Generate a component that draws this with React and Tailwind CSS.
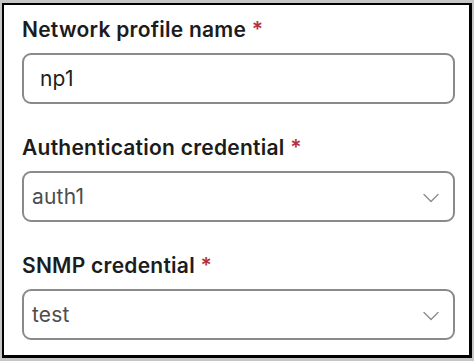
const FONT = { fontFamily: "Inter, 'Noto Sans', sans-serif" };

function Label({ children }) {
  return (
    <div className="text-[21px] leading-[24px] font-semibold tracking-[0.25px] text-[#1c1c1c]">
      {children} <span className="text-[#b3303c]">*</span>
    </div>
  );
}

function Chevron() {
  return (
    <svg width="16" height="10" viewBox="0 0 16 10" className="shrink-0 mt-[2px]">
      <path d="M1 1.5 L8 8.5 L15 1.5" fill="none" stroke="#8c8c8c" strokeWidth="1.4" strokeLinecap="round" strokeLinejoin="round" />
    </svg>
  );
}

function SelectField({ label, value, top }) {
  return (
    <div className={top}>
      <Label>{label}</Label>
      <div className="mt-[11px] h-[51px] rounded-[9px] border-2 border-[#8a8a8a] flex items-center justify-between pl-[8px] pr-[14px]">
        <span className="text-[21px] tracking-[0.2px] text-[#4d4d4d]">{value}</span>
        <Chevron />
      </div>
    </div>
  );
}

export default function App() {
  return (
    <div className="w-[474px] h-[361px] bg-[#c6c6c6] pt-[3px] pl-[2px]" style={FONT}>
      <div className="w-[470px] h-[355px] bg-white border-black border-t-2 border-l-2 border-r-[3px] border-b-[3px] pt-[13px] pl-[18px] pr-[14px]">
        <div>
          <Label>Network profile name</Label>
          <div className="mt-[11px] h-[51px] rounded-[9px] border-2 border-[#8a8a8a] flex items-center px-[16px]">
            <span className="text-[21px] tracking-[0.2px] text-[#1e1e1e]">np1</span>
          </div>
        </div>
        <SelectField label="Authentication credential" value="auth1" top="mt-[32px]" />
        <SelectField label="SNMP credential" value="test" top="mt-[32px]" />
      </div>
    </div>
  );
}
